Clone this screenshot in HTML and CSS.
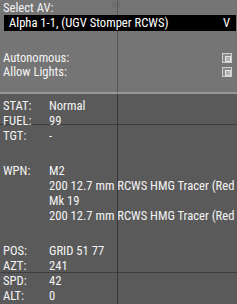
FILE: index.html
```html
<!DOCTYPE html>
<html lang="en">
	<head>
		<meta charset="UTF-8" />
		<meta name="viewport" content="width=device-width, initial-scale=1.0" />
		<title>UAV Terminal</title>

		<link rel="stylesheet" href="styles.css">
	</head>
	<body>
		<div class="map">
			<span class="grid gx1">01</span>
			<span class="grid gy1">03</span>
			<span class="grid gy2">02</span>
		</div>

		<main class="panel">
			<section class="top">
				<p class="label">Select AV:</p>
				<div class="select">
					<span>Alpha 1-1, (UGV Stomper RCWS)</span>
					<span class="arrow">V</span>
				</div>

				<ul class="toggles">
					<li>Autonomous: <i class="check"></i></li>
					<li>Allow Lights: <i class="check"></i></li>
				</ul>
			</section>

			<dl class="info">
				<dt>STAT:</dt><dd>Normal</dd>
				<dt>FUEL:</dt><dd>99</dd>
				<dt>TGT:</dt><dd>-</dd>
			</dl>

			<dl class="info">
				<dt>WPN:</dt>
				<dd>
					M2<br>
					200 12.7 mm RCWS HMG Tracer (Red<br>
					Mk 19<br>
					200 12.7 mm RCWS HMG Tracer (Red
				</dd>
			</dl>

			<dl class="info">
				<dt>POS:</dt><dd>GRID 51 77</dd>
				<dt>AZT:</dt><dd>241</dd>
				<dt>SPD:</dt><dd>42</dd>
				<dt>ALT:</dt><dd>0</dd>
			</dl>
		</main>
	</body>
</html>
```
FILE: styles.css
```css
* {
	padding: 0;
	margin: 0;
	box-sizing: border-box;
}
ul {
	list-style: none;
}

html,
body {
	width: 237px;
	height: 304px;
	overflow: hidden;
}
body {
	background-color: #5a5a5a;
	font-family: "Roboto Condensed", Roboto, sans-serif;
	font-size: 12.6px;
	color: #f4f4f4;
}

/* map behind the panel */
.map {
	position: absolute;
	inset: 0;
	z-index: -1;
	background:
		linear-gradient(to right, transparent 117px, #363636 117px, #363636 118px, transparent 118px),
		linear-gradient(to bottom, transparent 124px, #3e3e3e 124px, #3e3e3e 125px, transparent 125px),
		linear-gradient(to bottom, transparent 272px, #3e3e3e 272px, #3e3e3e 273px, transparent 273px);
}
.grid {
	position: absolute;
	font-size: 9px;
	font-weight: bold;
	color: #4a4a4a;
}
.gx1 {
	left: 112px;
	top: 0;
}
.gy1 {
	left: 4px;
	top: 118px;
}
.gy2 {
	left: 3px;
	top: 266px;
}

.top {
	padding: 1px 1px 13px 4px;
	background-color: rgba(255, 255, 255, 0.17);
	border-bottom: 2px solid rgba(255, 255, 255, 0.26);
}
.label {
	line-height: 14px;
	margin-left: -1px;
}
.select {
	display: flex;
	justify-content: space-between;
	height: 16px;
	line-height: 16px;
	padding: 0 6px 0 5px;
	background-color: #000;
	color: #fff;
	white-space: nowrap;
}

.toggles {
	margin-top: 20px;
	margin-left: -1px;
}
.toggles li {
	display: flex;
	justify-content: space-between;
	align-items: center;
	line-height: 14px;
	padding-right: 4px;
}
.check {
	display: block;
	width: 10px;
	height: 10px;
	padding: 2px;
	border: 1px solid #cfcfcf;
	background-color: #8a8a8a;
}
.check::after {
	content: "";
	display: block;
	width: 4px;
	height: 4px;
	border: 1px solid #e2e2e2;
	background-color: #b4b4b4;
}

.info {
	display: grid;
	grid-template-columns: 46px 1fr;
	padding-left: 3px;
	line-height: 15px;
	white-space: nowrap;
	overflow: hidden;
	margin-bottom: 20px;
}
.info:first-of-type {
	margin-top: 4px;
}
.info:last-child {
	margin-bottom: 0;
}
```
